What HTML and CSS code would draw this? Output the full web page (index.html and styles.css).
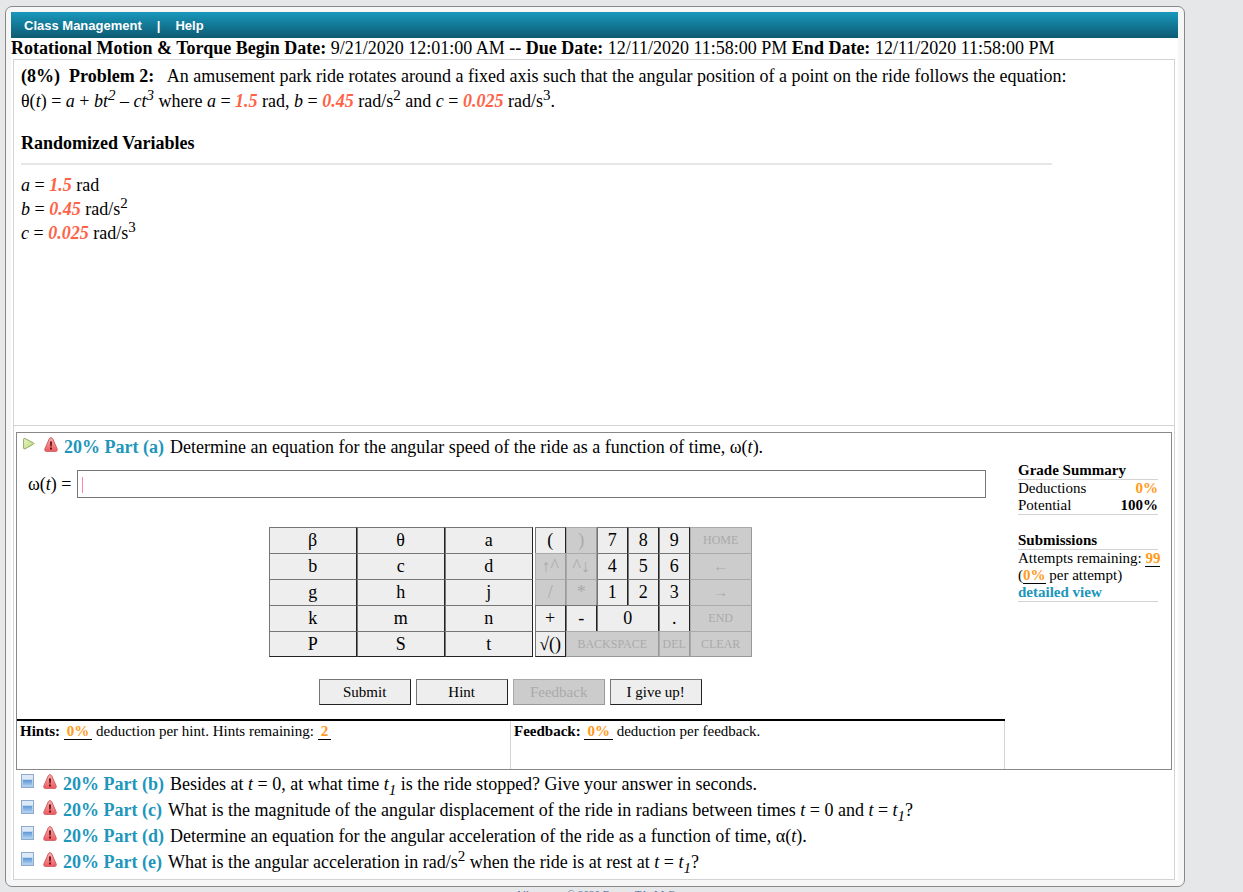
FILE: index.html
```html
<!DOCTYPE html>
<html lang="en">
<head>
  <meta charset="UTF-8">
  <title>Rotational Motion &amp; Torque</title>
  <link rel="stylesheet" href="styles.css">
</head>
<body>
  <svg class="defs" width="0" height="0">
    <defs>
      <linearGradient id="redFill" x1="0" y1="0" x2="0" y2="1">
        <stop offset="0" stop-color="#f7b0b0"/><stop offset="1" stop-color="#ee5a60"/>
      </linearGradient>
      <linearGradient id="blueFill" x1="0" y1="0" x2="0" y2="1">
        <stop offset="0" stop-color="#c9dcf0"/><stop offset="1" stop-color="#a9cbec"/>
      </linearGradient>
      <linearGradient id="blueBar" x1="0" y1="0" x2="0" y2="1">
        <stop offset="0" stop-color="#5f97d3"/><stop offset="1" stop-color="#9cc4ec"/>
      </linearGradient>
      <linearGradient id="greenFill" x1="0" y1="0" x2="1" y2="1">
        <stop offset="0" stop-color="#edf7cb"/><stop offset="1" stop-color="#b5d775"/>
      </linearGradient>
    </defs>
    <symbol id="warn" viewBox="0 0 14 15">
      <path d="M5.4 1.5Q7 -.5 8.6 1.5L13.2 12Q13.6 14.4 11.8 14.4H2.2Q.4 14.4.8 12Z" fill="url(#redFill)" stroke="#cf6267"/>
      <path d="M6 4.5h2l-.3 5H6.3z" fill="#661318"/>
      <rect x="6" y="10.5" width="2" height="2" fill="#661318"/>
    </symbol>
    <symbol id="box" viewBox="0 0 14 15">
      <rect x=".5" y=".5" width="12" height="13" fill="url(#blueFill)" stroke="#8faaca"/>
      <rect x="1" y="1" width="11" height="4" fill="#dce9f6"/>
      <rect x="2" y="6" width="9" height="5" fill="url(#blueBar)"/>
    </symbol>
    <symbol id="play" viewBox="0 0 14 15">
      <path d="M1.6 2.2Q1.6.9 3 1.6L11.4 5.8Q12.6 6.5 11.4 7.2L3 11.8Q1.6 12.4 1.6 11Z" fill="url(#greenFill)" stroke="#8fae62"/>
    </symbol>
  </svg>

  <div class="frame">
    <div class="content">
      <nav class="menu">
        <a href="#">Class Management</a><span>|</span><a href="#">Help</a>
      </nav>
      <div class="dates"><b>Rotational Motion &amp; Torque Begin Date:</b> 9/21/2020 12:01:00 AM <b>-- Due Date:</b> 12/11/2020 11:58:00 PM <b>End Date:</b> 12/11/2020 11:58:00 PM</div>

      <div class="problem">
        <div class="statement">
          <p><b>(8%)&nbsp; Problem 2:</b> &nbsp; An amusement park ride rotates around a fixed axis such that the angular position of a point on the ride follows the equation:<br>
          θ(<i>t</i>) = <i>a</i> + <i>bt<sup>2</sup></i> – <i>ct<sup>3</sup></i> where <i>a</i> = <em>1.5</em> rad, <i>b</i> = <em>0.45</em> rad/s<sup>2</sup> and <i>c</i> = <em>0.025</em> rad/s<sup>3</sup>.</p>
          <h2>Randomized Variables</h2>
          <hr>
          <p class="variables"><i>a</i> = <em>1.5</em> rad<br>
          <i>b</i> = <em>0.45</em> rad/s<sup>2</sup><br>
          <i>c</i> = <em>0.025</em> rad/s<sup>3</sup></p>
        </div>

        <div class="active-part">
          <div class="part">
            <svg class="icon"><use href="#play"/></svg>
            <svg class="icon"><use href="#warn"/></svg>
            <b class="part-name">20% Part (a)</b>
            <span>Determine an equation for the angular speed of the ride as a function of time, ω(<i>t</i>).</span>
          </div>
          <div class="work">
            <div class="answer">
              <div class="answer-row">
                <label for="answer">ω(<i>t</i>) =</label>
                <input type="text" id="answer">
              </div>
              <div class="keyboard">
                <div class="letters">
                  <button>β</button><button>θ</button><button>a</button>
                  <button>b</button><button>c</button><button>d</button>
                  <button>g</button><button>h</button><button>j</button>
                  <button>k</button><button>m</button><button>n</button>
                  <button>P</button><button>S</button><button>t</button>
                </div>
                <div class="numbers">
                  <button>(</button><button disabled>)</button><button>7</button><button>8</button><button>9</button><button class="word" disabled>HOME</button>
                  <button disabled>↑^</button><button disabled>^↓</button><button>4</button><button>5</button><button>6</button><button class="arrow" disabled>←</button>
                  <button disabled>/</button><button disabled>*</button><button>1</button><button>2</button><button>3</button><button class="arrow" disabled>→</button>
                  <button>+</button><button>-</button><button class="two">0</button><button>.</button><button class="word" disabled>END</button>
                  <button>√()</button><button class="word three" disabled>BACKSPACE</button><button class="word" disabled>DEL</button><button class="word" disabled>CLEAR</button>
                </div>
              </div>
              <div class="actions">
                <button>Submit</button>
                <button>Hint</button>
                <button disabled>Feedback</button>
                <button>I give up!</button>
              </div>
            </div>
            <div class="summary">
              <h3>Grade Summary</h3>
              <div class="block">
                <div class="row"><span>Deductions</span><b class="orange">0%</b></div>
                <div class="row"><span>Potential</span><b>100%</b></div>
              </div>
              <h3>Submissions</h3>
              <div class="block">
                <div>Attempts remaining: <b class="orange line">99</b></div>
                <div>(<b class="orange line">0%</b> per attempt)</div>
                <a href="#">detailed view</a>
              </div>
            </div>
          </div>
          <div class="help">
            <div><b>Hints:</b> <b class="orange line pad">0%</b> deduction per hint. Hints remaining: <b class="orange line pad">2</b></div>
            <div><b>Feedback:</b> <b class="orange line pad">0%</b> deduction per feedback.</div>
          </div>
        </div>

        <div class="parts">
          <div class="part">
            <svg class="icon"><use href="#box"/></svg>
            <svg class="icon"><use href="#warn"/></svg>
            <b class="part-name">20% Part (b)</b>
            <span>Besides at <i>t</i> = 0, at what time <i>t<sub>1</sub></i> is the ride stopped? Give your answer in seconds.</span>
          </div>
          <div class="part">
            <svg class="icon"><use href="#box"/></svg>
            <svg class="icon"><use href="#warn"/></svg>
            <b class="part-name">20% Part (c)</b>
            <span>What is the magnitude of the angular displacement of the ride in radians between times <i>t</i> = 0 and <i>t</i> = <i>t<sub>1</sub></i>?</span>
          </div>
          <div class="part">
            <svg class="icon"><use href="#box"/></svg>
            <svg class="icon"><use href="#warn"/></svg>
            <b class="part-name">20% Part (d)</b>
            <span>Determine an equation for the angular acceleration of the ride as a function of time, α(<i>t</i>).</span>
          </div>
          <div class="part">
            <svg class="icon"><use href="#box"/></svg>
            <svg class="icon"><use href="#warn"/></svg>
            <b class="part-name">20% Part (e)</b>
            <span>What is the angular acceleration in rad/s<sup>2</sup> when the ride is at rest at <i>t</i> = <i>t<sub>1</sub></i>?</span>
          </div>
        </div>
      </div>
    </div>
  </div>
  <footer>All content © 2020 Expert TA, LLC</footer>
</body>
</html>
```
FILE: styles.css
```css
* { box-sizing: border-box; }
html { overflow: hidden; }
body { margin: 6px 58px 0 5px; background: #e6e7e9; color: #000; font: 18px/25px "Liberation Serif", "Times New Roman", serif; }
p, h2, h3 { margin: 0; }
button, input { font-family: inherit; color: #000; }
sup, sub { font-size: 15px; line-height: 0; }
em { color: #ff6347; font-weight: bold; }
.defs { position: absolute; }

.frame { border: 1px solid #888; border-radius: 7px; background: #f6f6f6; padding: 5px 6px 6px 5px; }
.content { background: #fff; }
.menu { display: flex; align-items: center; gap: 15px; height: 26px; padding: 2px 13px 0; background: linear-gradient(#1998bc, #0d5a72); color: #fff; font: bold 13px/16px "Liberation Sans", Arial, sans-serif; }
.menu a { color: #fff; text-decoration: none; }
.dates { line-height: 21px; white-space: nowrap; }

.problem { margin: 0 3px 0 2px; border: 1px solid #d3d3d3; }
.statement { min-height: 366px; padding: 4px 7px; border-bottom: 1px solid #d3d3d3; white-space: nowrap; }
.statement h2 { margin-top: 17px; font-size: 18px; line-height: 25px; }
.statement hr { width: 90%; height: 2px; margin: 7px 0 8px; border: 0; background: #e6e6e6; }
.variables { line-height: 24px; }

.active-part { margin: 6px 2px 0 2px; border: 1px solid #888; }
.part { display: flex; gap: 8px; height: 26px; line-height: 26px; white-space: nowrap; }
.part-name { margin: 0 -2px; color: #2196bb; }
.icon { flex: none; width: 14px; height: 15px; margin-top: 3px; }
.active-part .part { padding: 1px 0 0 5px; height: 29px; }
.parts { padding: 1px 0 4px 7px; }

.work { display: flex; justify-content: space-between; }
.answer { flex: 0 0 84%; padding: 8px 0 14px 11px; }
.answer-row { display: flex; align-items: center; gap: 5px; }
.answer-row input { flex: 1; height: 28px; border: 1px solid #767676; padding: 0 8px; font-size: 18px; background: linear-gradient(#ff82b4, #ff82b4) 4px 6px / 1px 16px no-repeat #fff; }
.keyboard { display: flex; justify-content: center; gap: 2px; margin-top: 29px; padding-left: 6px; }
.letters, .numbers { display: grid; grid-auto-rows: 26px; }
.letters { grid-template-columns: repeat(3, 88px); }
.numbers { grid-template-columns: repeat(5, 31px) 62px; }
button { padding: 0; border: 1px solid; border-color: #767676 #222 #222 #767676; background: #eee; font-size: 18px; white-space: nowrap; }
button:disabled { border-color: #aaa #999 #999 #aaa; background: #ccc; color: #aaa; }
.keyboard button { border-bottom-width: 0; overflow: hidden; }
.letters button:nth-last-child(-n+3), .numbers button:nth-last-child(-n+4) { border-bottom-width: 1px; }
.keyboard .word { font-size: 12px; }
.keyboard .arrow { font-size: 15px; }
.two { grid-column: span 2; }
.three { grid-column: span 3; }
.actions { display: flex; justify-content: center; gap: 5px; margin-top: 22px; padding-left: 6px; }
.actions button { width: 92px; height: 26px; font-size: 15px; }

.summary { width: 140px; margin-right: 13px; font-size: 15px; line-height: 17px; white-space: nowrap; }
.summary h3 { font-size: 15px; line-height: 17px; }
.block { margin-bottom: 17px; border: solid #d3d3d3; border-width: 1px 0; }
.row { display: flex; justify-content: space-between; }
.orange { color: #ff9a1a; }
.line { border-bottom: 1px solid #000; }
.pad { padding: 0 3px; }
.summary a { color: #2196bb; font-weight: bold; text-decoration: none; }

.help { display: flex; margin-right: 166px; border-top: 2px solid #000; font-size: 15px; line-height: 21px; white-space: nowrap; }
.help div { flex: 1; height: 48px; padding-left: 3px; border-right: 1px solid #d3d3d3; }
footer { margin-left: 510px; color: #4b6a94; font-size: 11px; line-height: 14px; }
```
